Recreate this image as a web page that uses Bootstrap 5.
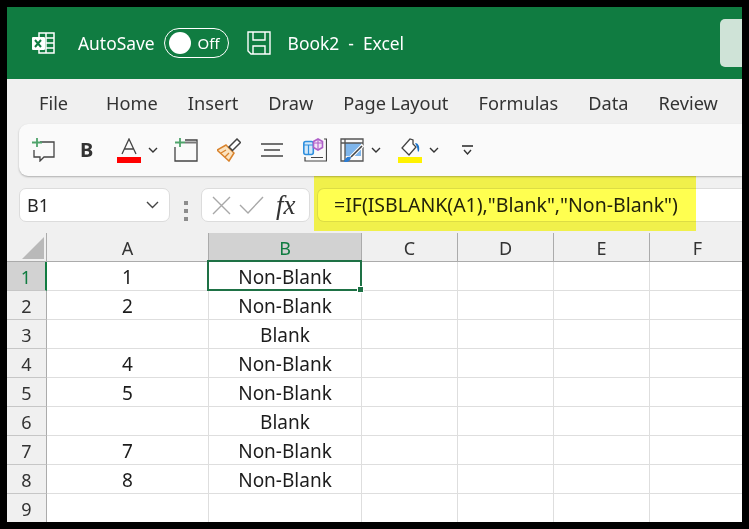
<!DOCTYPE html>
<html lang="en">
<head>
    <meta charset="UTF-8">
    <meta name="viewport" content="width=device-width, initial-scale=1.0">
    <title>Book2 - Excel</title>
    <link rel="stylesheet" href="https://cdn.jsdelivr.net/npm/bootstrap@5.3.0/dist/css/bootstrap.min.css">
    <style>
        html, body { height: 100%; }
        body { background: #000; padding: 7px; overflow: hidden; font-family: "Noto Sans", sans-serif; color: #262626; }
        .xl-frame { position: relative; width: 735px; height: 515px; background: #f0f0f0; overflow: hidden; }

        .xl-title { height: 72px; background: #107c41; color: #fff; padding-left: 24px; font-size: 17.4px; }
        .xl-logo { width: 24px; height: 24px; }
        .xl-autosave { margin-left: 23px; }
        .xl-toggle { width: 65px; height: 30px; margin-left: 9px; border: 1px solid #fff; border-radius: 15px; padding: 0 0 0 4px; font-size: 15px; }
        .xl-knob { width: 22px; height: 22px; border-radius: 50%; background: #fff; margin-right: 7px; }
        .xl-save { width: 24px; height: 24px; margin-left: 18px; }
        .xl-book { margin-left: 17px; white-space: pre; }
        .xl-search { width: 22px; height: 48px; background: #cfe3d7; border-radius: 5px 0 0 5px; }

        .xl-menu { height: 45px; padding-left: 32px; padding-top: 5px; font-size: 18.2px; gap: 30px; white-space: nowrap; color: #333; }

        .xl-ribbon { height: 52px; margin-left: 12px; background: #fafafa; border-radius: 9px 0 0 9px; box-shadow: 0 1px 2px rgba(0,0,0,.28); padding-left: 12px; }
        .xl-ribbon svg { flex: none; }
        .t-bold { margin-left: 25px; font-size: 20px; color: #333; }
        .t-color { margin-left: 24px; }
        .t-chev { margin-left: 7px; }
        .t-new { margin-left: 16px; }
        .t-brush { margin-left: 19px; }
        .t-align { margin-left: 20px; }
        .t-3d { margin-left: 20px; }
        .t-table { margin-left: 13px; }
        .t-fill { margin-left: 17px; }
        .t-more { margin-left: 23px; }

        .xl-formula { height: 57px; padding-top: 12px; padding-left: 12px; }
        .xl-box { height: 34px; background: #fff; border: 1px solid #dcdcdc; border-radius: 7px; }
        .xl-name { width: 151px; padding: 0 10px 0 7px; font-size: 18px; }
        .xl-dots { width: 31px; }
        .xl-dots i { display: block; width: 4px; height: 4px; background: #8c8c8c; margin: 2px 0; }
        .xl-fx { width: 109px; padding-left: 10px; }
        .xl-fx-text { font-family: "Liberation Serif", serif; font-style: italic; font-size: 27px; margin-left: 12px; color: #333; }
        .xl-input { flex: 1; margin-left: 7px; border-radius: 7px 0 0 7px; border-right: 0; padding-left: 16px; font-size: 19.5px; white-space: nowrap; color: #222; }
        .xl-mark { position: absolute; left: 307px; top: 169px; width: 382px; height: 55px; background: #ffff50; mix-blend-mode: multiply; }

        .xl-sheet { display: grid; grid-template-columns: 40px 162px 153px 96px 96px 96px 96px; grid-auto-rows: 29px; font-size: 19px; color: #1c1c1c; }
        .xl-cell { background: #fff; border-right: 1px solid #dedede; border-bottom: 1px solid #dedede; display: flex; align-items: center; justify-content: center; line-height: 1; padding-top: 2px; }
        .xl-head { background: #f0f0f0; border-right: 1px solid #ababab; border-bottom: 1px solid #ababab; color: #333; font-size: 18px; }
        .xl-rowhead { background: #f0f0f0; border-right: 1px solid #ababab; border-bottom: 1px solid #c6c6c6; color: #333; font-size: 18px; }
        .xl-corner { justify-content: flex-end; align-items: flex-end; padding: 0 2px 2px 0; }
        .xl-on { background: #d2d2d2; color: #107c41; }
        .xl-head.xl-on { border-bottom: 2px solid #107c41; }
        .xl-rowhead.xl-on { border-right: 2px solid #107c41; }
        .xl-selected { position: absolute; left: 200px; top: 253px; width: 155px; height: 31px; border: 2px solid #1e7145; }
        .xl-handle { position: absolute; right: -4px; bottom: -4px; width: 7px; height: 7px; background: #1e7145; border: 1px solid #fff; }
    </style>
</head>
<body>
    <div class="xl-frame">
        <!-- Title bar -->
        <div class="xl-title d-flex align-items-center">
            <svg class="xl-logo" viewBox="0 0 24 24">
                <path d="M8 2h15v20H8z" fill="none" stroke="#fff" stroke-width="1.5"/>
                <path d="M15 2v20M15 7h8M15 12h8M15 17h8" stroke="#fff" stroke-width="1.5"/>
                <rect x="1" y="6" width="13" height="13" rx="1" fill="#fff"/>
                <path d="M4 9l6 7M10 9l-6 7" stroke="#107c41" stroke-width="2"/>
            </svg>
            <span class="xl-autosave">AutoSave</span>
            <div class="xl-toggle d-flex align-items-center"><span class="xl-knob"></span><span>Off</span></div>
            <svg class="xl-save" viewBox="0 0 24 24" fill="none" stroke="#fff" stroke-width="1.4">
                <path d="M1 1h22v22H4l-3-3z"/><path d="M6 1v8h12V1M6 23v-8h12v8"/>
            </svg>
            <span class="xl-book">Book2  -  Excel</span>
            <div class="xl-search ms-auto"></div>
        </div>

        <!-- Menu -->
        <div class="xl-menu d-flex align-items-center">
            <span>File</span><span class="ms-2">Home</span><span>Insert</span><span>Draw</span><span>Page Layout</span><span>Formulas</span><span>Data</span><span>Review</span>
        </div>

        <!-- Quick ribbon -->
        <div class="xl-ribbon d-flex align-items-center">
            <svg width="24" height="24" viewBox="0 0 24 24" fill="none">
                <path d="M9 4h14v15H13l-4 4v-4H3v-7" stroke="#444" stroke-width="1.3"/>
                <path d="M6 0v9M1 4.500h10" stroke="#4fa36b" stroke-width="1.8"/>
            </svg>
            <span class="t-bold fw-bold">B</span>
            <svg class="t-color" width="24" height="25" viewBox="0 0 24 25">
                <path d="M5 16L12 1l7 15M7.500 11h9" fill="none" stroke="#444" stroke-width="1.3"/>
                <rect y="19" width="24" height="6" fill="#ff0000"/>
            </svg>
            <svg class="t-chev" width="10" height="8" viewBox="0 0 10 8"><path d="M1 2l4 4 4-4" fill="none" stroke="#333" stroke-width="1.4"/></svg>
            <svg class="t-new" width="24" height="24" viewBox="0 0 24 24" fill="none">
                <path d="M1 9v14h22V2H11" stroke="#444" stroke-width="1.3"/>
                <path d="M11 4.500h12" stroke="#777" stroke-width="2"/>
                <path d="M6 0v9M1 4.500h10" stroke="#4fa36b" stroke-width="1.8"/>
            </svg>
            <svg class="t-brush" width="24" height="24" viewBox="0 0 24 24">
                <path d="M9 7l8 8-5 8L0 12z" fill="#fbe3c0" stroke="#d9822b" stroke-width="1.5"/>
                <path d="M4 15l5-3M8 19l4-4" stroke="#d9822b" stroke-width="1.3"/>
                <path d="M12 9l8-8 3.500 3.500-8 8z" fill="#fff" stroke="#444" stroke-width="1.5"/>
            </svg>
            <svg class="t-align" width="22" height="14" viewBox="0 0 22 14"><path d="M0 1h22M3 7h16M0 13h22" stroke="#444" stroke-width="1.4"/></svg>
            <svg class="t-3d" width="24" height="24" viewBox="0 0 24 24" fill="none">
                <path d="M21 1h2.500v22H2v-4M8 19.500h12" stroke="#444" stroke-width="1.2"/>
                <rect x="0.800" y="3.500" width="9.500" height="13" rx="2" fill="#d3e8fa" stroke="#2f8fde" stroke-width="1.6"/>
                <path d="M1 7h9M5.500 7v9" stroke="#2f8fde" stroke-width="1.2"/>
                <path d="M10.500 3.500l4.500-2.500 4.500 2.500v6l-4.500 2.500-4.500-2.500z" fill="#f3e3f7" stroke="#b061c9" stroke-width="1.6"/>
                <path d="M15 1v11M10.500 5h9" stroke="#b061c9" stroke-width="1.100"/>
            </svg>
            <svg class="t-table" width="24" height="24" viewBox="0 0 24 24">
                <rect x="5" y="5" width="16" height="13" fill="#7fb6ec"/>
                <path d="M1 1h22v22H1zM1 5h22M5 1v22" fill="none" stroke="#555" stroke-width="1.3"/>
                <path d="M23 7L11 19" stroke="#fff" stroke-width="3.500"/>
                <path d="M22 8L11 19" stroke="#444" stroke-width="1.6"/>
                <path d="M4 24c1-4 3-6 7-5 0 3-3 6-7 5z" fill="#2b7cd3"/>
            </svg>
            <svg class="t-chev" width="10" height="8" viewBox="0 0 10 8"><path d="M1 2l4 4 4-4" fill="none" stroke="#333" stroke-width="1.4"/></svg>
            <svg class="t-fill" width="24" height="25" viewBox="0 0 24 25">
                <path d="M12 1L4 10l7 7 7-8-3-3V2z" fill="#fff" stroke="#444" stroke-width="1.3"/>
                <path d="M17 5c3 0 5 3 4 8l-1 1-1-5" fill="#1a73c9"/>
                <rect y="19" width="24" height="6" fill="#fff200"/>
            </svg>
            <svg class="t-chev" width="10" height="8" viewBox="0 0 10 8"><path d="M1 2l4 4 4-4" fill="none" stroke="#333" stroke-width="1.4"/></svg>
            <svg class="t-more" width="11" height="11" viewBox="0 0 11 11"><path d="M0 1h11" stroke="#333" stroke-width="1.6"/><path d="M2 5l3.500 4L9 5" fill="none" stroke="#333" stroke-width="1.4"/></svg>
        </div>

        <!-- Formula bar -->
        <div class="xl-formula d-flex">
            <div class="xl-box xl-name d-flex align-items-center justify-content-between">
                <span>B1</span>
                <svg width="13" height="8" viewBox="0 0 13 8"><path d="M1 1l5.500 5.500L12 1" fill="none" stroke="#444" stroke-width="1.4"/></svg>
            </div>
            <div class="xl-dots d-flex flex-column align-items-center justify-content-center"><i></i><i></i><i></i></div>
            <div class="xl-box xl-fx d-flex align-items-center">
                <svg width="19" height="19" viewBox="0 0 19 19"><path d="M1 1l17 17M18 1L1 18" stroke="#a8a8a8" stroke-width="1.4"/></svg>
                <svg class="ms-2" width="25" height="18" viewBox="0 0 25 18"><path d="M1 9l8 8L24 1" fill="none" stroke="#a8a8a8" stroke-width="1.4"/></svg>
                <span class="xl-fx-text">fx</span>
            </div>
            <div class="xl-box xl-input d-flex align-items-center">=IF(ISBLANK(A1),"Blank","Non-Blank")</div>
        </div>
        <div class="xl-mark"></div>

        <!-- Sheet -->
        <div class="xl-sheet" id="sheet"></div>
        <div class="xl-selected"><div class="xl-handle"></div></div>
    </div>

    <script src="https://cdn.jsdelivr.net/npm/bootstrap@5.3.0/dist/js/bootstrap.bundle.min.js"></script>
    <script>
        const rows = [
            ['1', 'Non-Blank'], ['2', 'Non-Blank'], ['', 'Blank'], ['4', 'Non-Blank'],
            ['5', 'Non-Blank'], ['', 'Blank'], ['7', 'Non-Blank'], ['8', 'Non-Blank'], ['', '']
        ];

        let html = '<div class="xl-cell xl-head xl-corner"><svg width="22" height="22" viewBox="0 0 22 22"><path d="M22 0v22H0z" fill="#b9b9b9"/></svg></div>';
        ['A', 'B', 'C', 'D', 'E', 'F'].forEach(col => {
            html += `<div class="xl-cell xl-head ${col === 'B' ? 'xl-on' : ''}">${col}</div>`;
        });
        rows.forEach((row, i) => {
            html += `<div class="xl-cell xl-rowhead ${i === 0 ? 'xl-on' : ''}">${i + 1}</div>`;
            html += `<div class="xl-cell">${row[0]}</div><div class="xl-cell">${row[1]}</div>`;
            html += '<div class="xl-cell"></div>'.repeat(4);
        });
        document.getElementById('sheet').innerHTML = html;
    </script>
</body>
</html>
